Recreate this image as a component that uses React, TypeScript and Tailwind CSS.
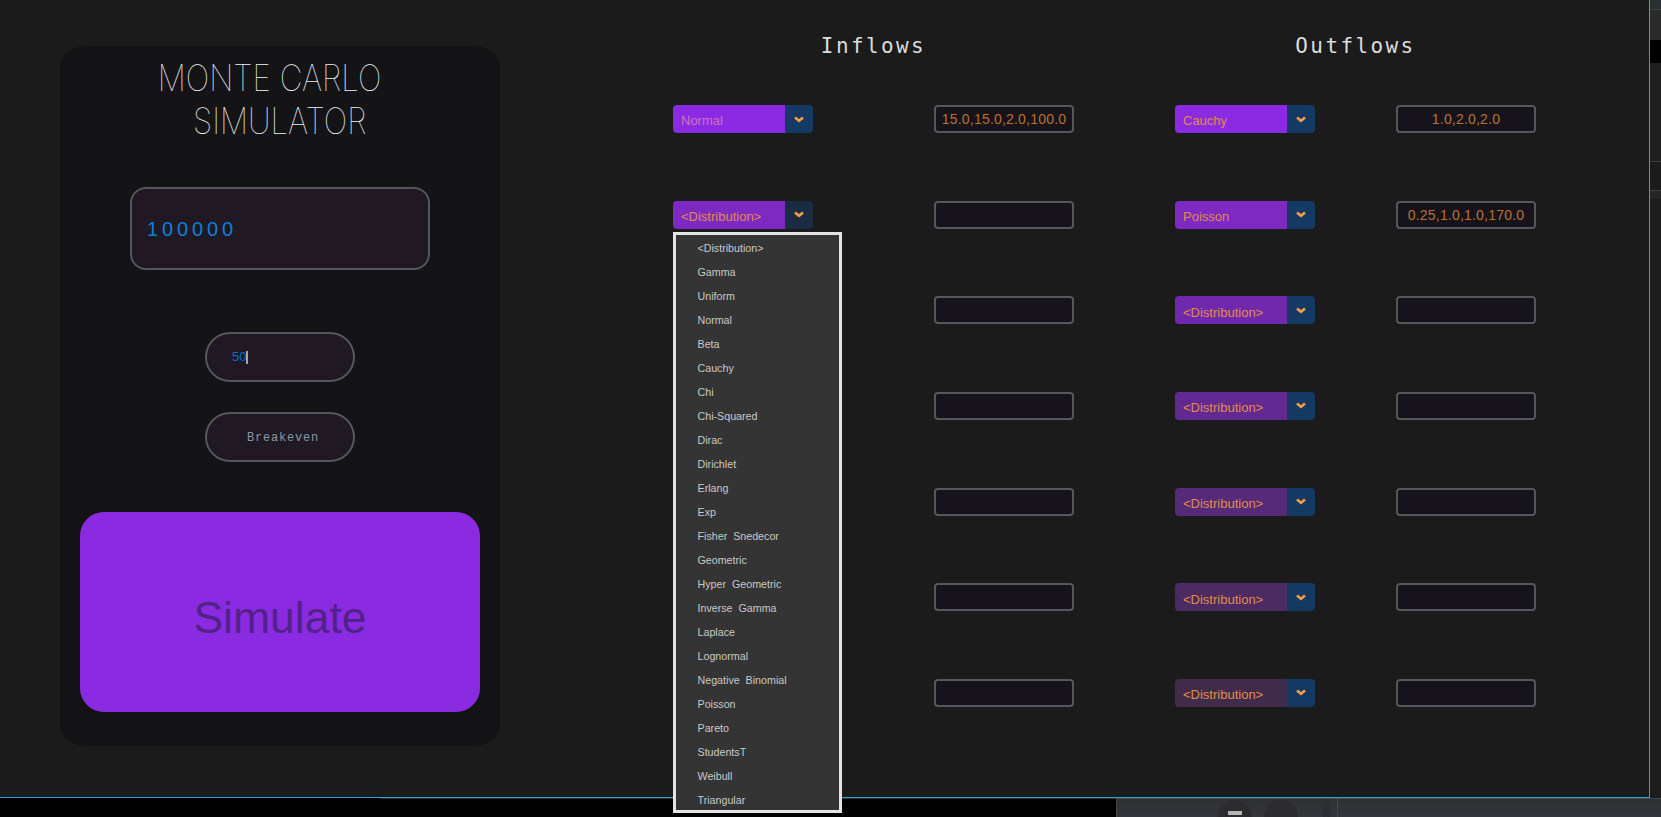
const DISTRIBUTIONS = [
  "<Distribution>",
  "Gamma",
  "Uniform",
  "Normal",
  "Beta",
  "Cauchy",
  "Chi",
  "Chi-Squared",
  "Dirac",
  "Dirichlet",
  "Erlang",
  "Exp",
  "Fisher  Snedecor",
  "Geometric",
  "Hyper  Geometric",
  "Inverse  Gamma",
  "Laplace",
  "Lognormal",
  "Negative  Binomial",
  "Poisson",
  "Pareto",
  "StudentsT",
  "Weibull",
  "Triangular",
];

const FADE = [
  "bg-[#8a2be2]",
  "bg-[#7c2ac2]",
  "bg-[#7029ac]",
  "bg-[#622993]",
  "bg-[#552a78]",
  "bg-[#4b2b62]",
  "bg-[#402b4a]",
];

// the rows under the open menu keep no label, the menu covers them
const INFLOWS = [
  { label: "Normal", value: "15.0,15.0,2.0,100.0" },
  { label: "<Distribution>", value: "" },
  { label: "", value: "" },
  { label: "", value: "" },
  { label: "", value: "" },
  { label: "", value: "" },
  { label: "", value: "" },
];

const OUTFLOWS = [
  { label: "Cauchy", value: "1.0,2.0,2.0" },
  { label: "Poisson", value: "0.25,1.0,1.0,170.0" },
  { label: "<Distribution>", value: "" },
  { label: "<Distribution>", value: "" },
  { label: "<Distribution>", value: "" },
  { label: "<Distribution>", value: "" },
  { label: "<Distribution>", value: "" },
];

function Chevron() {
  return (
    <svg width="10" height="7" viewBox="0 0 10 7" fill="none">
      <path d="M1 1.5 L5 4.8 L9 1.5" stroke="#f59e47" strokeWidth="2.6" />
    </svg>
  );
}

function DistributionMenu() {
  return (
    <ul className="absolute left-0 top-[31px] z-10 h-[581px] w-[169px] overflow-hidden border-[3px] border-[#e4e4e4] bg-[#343434] pt-[1px] text-[10.7px] text-[#c9c9c9]">
      {DISTRIBUTIONS.map((name) => (
        <li key={name} className="flex h-[24px] items-center whitespace-pre pl-[21.5px]">
          {name}
        </li>
      ))}
    </ul>
  );
}

function FlowRow({
  label,
  value,
  rowIndex,
  open,
}: {
  label: string;
  value: string;
  rowIndex: number;
  open?: boolean;
}) {
  return (
    <div className="flex h-[28px] justify-between">
      <div className="relative flex w-[140px]">
        <div
          className={`flex w-[112px] items-center rounded-l-[4px] pl-[8px] pt-[4px] text-[13px] ${FADE[rowIndex]} ${
            label === "Normal" ? "text-[#cf73c4]" : "text-[#e08c4c]"
          }`}
        >
          {label}
        </div>
        <div
          className={`flex w-[28px] items-center justify-center rounded-r-[4px] ${
            open ? "bg-[#1b2c42]" : "bg-[#143a63]"
          }`}
        >
          <Chevron />
        </div>
        {open && <DistributionMenu />}
      </div>
      <input
        readOnly
        defaultValue={value}
        className="h-[28px] w-[140px] rounded-[4px] border-2 border-[#54575b] bg-[#16141a] text-center text-[14px] tracking-[0.2px] text-[#b8722f] outline-none"
      />
    </div>
  );
}

function FlowColumn({
  title,
  rows,
  openRow,
  className,
}: {
  title: string;
  rows: { label: string; value: string }[];
  openRow?: number;
  className: string;
}) {
  return (
    <section className={className}>
      <h2 className="h-[105px] pt-[31px] text-center font-['DejaVu_Sans_Mono',monospace] text-[21px] leading-[30px] tracking-[2.4px] text-[#dcdcdc]">
        {title}
      </h2>
      <div className="flex flex-col gap-[67.67px]">
        {rows.map((row, i) => (
          <FlowRow key={i} label={row.label} value={row.value} rowIndex={i} open={openRow === i} />
        ))}
      </div>
    </section>
  );
}

function ControlPanel() {
  return (
    <aside className="ml-[60px] mt-[46px] flex h-[700px] w-[440px] flex-col items-center rounded-[24px] bg-[#141316]">
      <h1 className="mt-[11px] flex flex-col items-center font-['Inter',sans-serif] text-[36px] font-thin leading-[43px] text-[#eef4f8]">
        <span className="mr-[20px] origin-center scale-x-[0.87] whitespace-nowrap">MONTE CARLO</span>
        <span className="origin-center scale-x-[0.87] whitespace-nowrap">SIMULATOR</span>
      </h1>
      <input
        readOnly
        defaultValue="100000"
        className="mt-[44px] h-[83px] w-[300px] rounded-[16px] border-2 border-[#54575b] bg-[#201924] pl-[15px] pt-[2px] font-['Liberation_Sans',sans-serif] text-[20px] tracking-[3.9px] text-[#0a80d8] outline-none"
      />
      <div className="mt-[62px] flex h-[50px] w-[150px] items-center rounded-full border-2 border-[#54575b] bg-[#201924] pl-[25px] font-['Liberation_Sans',sans-serif] text-[13px] text-[#0a6fc4]">
        50
        <span className="h-[13px] w-[2px] bg-[#a8a8a8]" />
      </div>
      <button className="mt-[30px] h-[50px] w-[150px] rounded-full border-2 border-[#54575b] bg-[#201924] pl-[6px] pt-[1px] font-['Liberation_Mono',monospace] text-[12px] tracking-[0.8px] text-[#8c96a3]">
        Breakeven
      </button>
      <button className="mt-[50px] h-[200px] w-[400px] rounded-[24px] bg-[#8a2be2] pt-[12px] font-['Liberation_Sans',sans-serif] text-[44.5px] text-[#52218a]">
        Simulate
      </button>
    </aside>
  );
}

export default function App() {
  return (
    <div className="h-[817px] overflow-hidden bg-black font-['Liberation_Sans',sans-serif]">
      <div className="flex h-[798px]">
        <div className="flex w-[1650px] border-b border-r border-[#26a9d6] bg-[#1b1b1b]">
          <ControlPanel />
          <FlowColumn title="Inflows" rows={INFLOWS} openRow={1} className="ml-[173px] w-[401px]" />
          <FlowColumn title="Outflows" rows={OUTFLOWS} className="ml-[101px] w-[361px]" />
        </div>
        {/* other windows peeking out behind the app */}
        <div className="flex flex-1 flex-col">
          <div className="h-[9px] bg-[#2b2f36]" />
          <div className="h-[31px] border-t border-[#3f3f3f] bg-[#2a2a2a]" />
          <div className="h-[23px] bg-black" />
          <div className="h-[98px] bg-[#1f1f1f]" />
          <div className="h-[29px] border-t border-[#3f3f3f] bg-[#1b1b1b]" />
          <div className="h-[9px] border-t border-[#3f3f3f] bg-[#262626]" />
          <div className="flex-1 bg-[#1c1c1c]" />
        </div>
      </div>
      <div className="flex h-[19px]">
        <div className="w-[380px]" />
        <div className="flex flex-1 flex-col">
          <div className="h-[5px] bg-[#2e2e2e]" />
          <div className="flex flex-1">
            <div className="h-px w-[736px] bg-[#2e2e2e]" />
            <div className="flex flex-1 overflow-hidden border-l border-t border-[#47494c] bg-linear-to-b from-[#2f3034] to-[#383b40]">
              <div className="ml-[101px] mt-[1px] flex h-[34px] w-[34px] shrink-0 justify-center rounded-full bg-[#2c2c2f] pt-[11px]">
                <div className="h-[4px] w-[14px] bg-[#b5b5b5]" />
              </div>
              <div className="ml-[12px] mt-[1px] h-[34px] w-[34px] shrink-0 rounded-full bg-[#2c2c2f]" />
              <div className="ml-[25px] h-full w-[7px] bg-[#2b2e32]" />
              <div className="ml-[7px] h-full w-px bg-[#47494c]" />
            </div>
          </div>
        </div>
      </div>
    </div>
  );
}
